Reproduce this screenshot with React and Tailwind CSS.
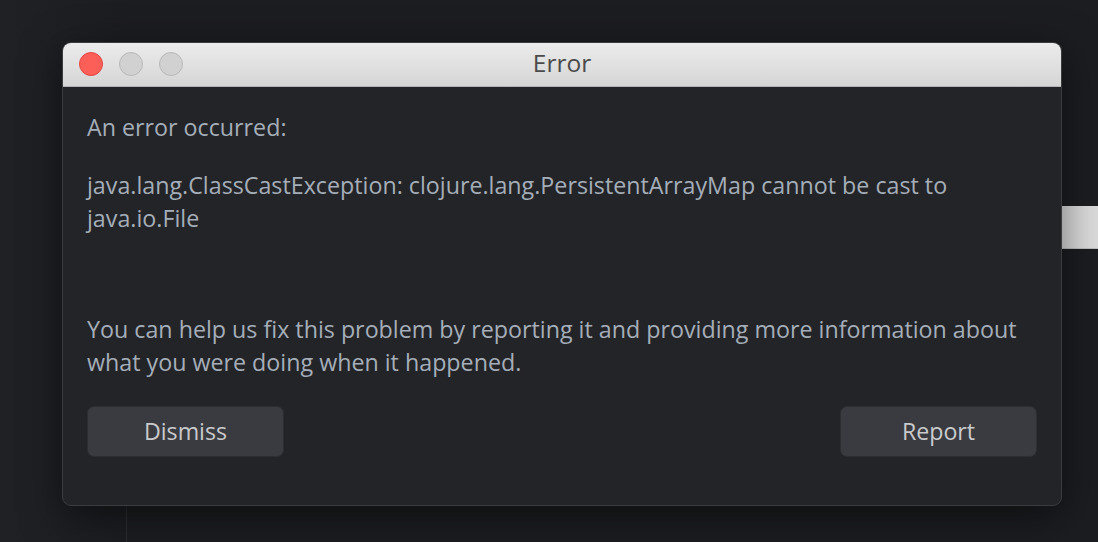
import React from "react";

export default function App() {
  return (
    <div
      className="relative w-[1098px] h-[542px] overflow-hidden bg-[#1c1d21]"
      style={{ fontFamily: "'Open Sans', Lato, sans-serif" }}
    >
      {/* background app hints */}
      <div className="absolute left-0 top-0 w-[126px] h-full bg-gradient-to-r from-[#1f2125] to-[#1c1d21]" />
      <div className="absolute left-[126px] top-[505px] bottom-0 w-px bg-[#2c2d31]" />
      <div className="absolute right-0 top-[206px] w-[40px] h-[43px] bg-[#dcdcdc] border-b border-[#bdbdbd]" />

      {/* dialog */}
      <div className="absolute left-[62px] top-[42px] w-[1000px] h-[464px] rounded-[9px] overflow-hidden border border-[#3a3c40] bg-[#222428] shadow-[0_10px_40px_rgba(0,0,0,0.5)] flex flex-col">
        <div className="relative h-[44px] shrink-0 bg-gradient-to-b from-[#ececec] to-[#d5d5d5] border-b border-[#b4b4b4] flex items-center">
          <div className="flex items-center gap-[16px] pl-[16px] -mt-[1px]">
            <div className="w-[24px] h-[24px] rounded-full bg-[#fc5f57] border border-[#e2463f]" />
            <div className="w-[24px] h-[24px] rounded-full bg-[#d1d1d1] border border-[#b9b9b9]" />
            <div className="w-[24px] h-[24px] rounded-full bg-[#d1d1d1] border border-[#b9b9b9]" />
          </div>
          <div className="absolute inset-0 flex items-center justify-center text-[24.5px] text-[#4b4b4b] -mt-[2px]">
            Error
          </div>
        </div>
        <div className="flex-1 flex flex-col px-[24px] pt-[24px] text-[23.25px] leading-[33px] text-[#a5aeb8]">
          <div>An error occurred:</div>
          <div className="mt-[25px]">
            java.lang.ClassCastException: clojure.lang.PersistentArrayMap cannot be cast to
            <br />
            java.io.File
          </div>
          <div className="mt-[78px]">
            You can help us fix this problem by reporting it and providing more information about
            <br />
            what you were doing when it happened.
          </div>
          <div className="mt-[27px] flex justify-between">
            <button className="w-[197px] h-[51px] rounded-[7px] bg-[#393b40] border border-[#2c2e32] text-[#c9cacc] text-[23.2px]">
              Dismiss
            </button>
            <button className="w-[197px] h-[51px] rounded-[7px] bg-[#393b40] border border-[#2c2e32] text-[#c9cacc] text-[23.2px]">
              Report
            </button>
          </div>
        </div>
      </div>
    </div>
  );
}
